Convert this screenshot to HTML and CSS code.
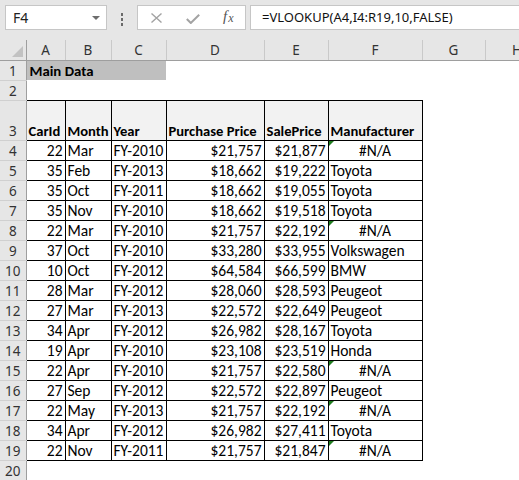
FILE: index.html
```html
<!DOCTYPE html>
<html>
<head>
<meta charset="utf-8">
<title>Sheet</title>
<link rel="stylesheet" href="styles.css">
</head>
<body>
<div class="toolbar">
  <div class="namebox"><span class="name">F4</span><span class="caret"></span></div>
  <div class="dots"><i></i><i></i><i></i></div>
  <div class="fbuttons">
    <svg class="ic-x" width="11" height="10" viewBox="0 0 11 10"><path d="M0.5 0.5 L10.5 9.5 M10.5 0.5 L0.5 9.5" stroke="#a3a3a3" stroke-width="1.4" fill="none"/></svg>
    <svg class="ic-ok" width="14" height="10" viewBox="0 0 14 10"><path d="M0.8 5 L4.8 9 L13.2 0.8" stroke="#a3a3a3" stroke-width="2" fill="none"/></svg>
    <span class="fx"><span class="f">f</span><span class="x">x</span></span>
  </div>
  <div class="formula">=VLOOKUP(A4,I4:R19,10,FALSE)</div>
</div>
<table class="grid">
  <colgroup>
    <col class="c-rh"><col class="c-a"><col class="c-b"><col class="c-c"><col class="c-d"><col class="c-e"><col class="c-f"><col class="c-g"><col class="c-h">
  </colgroup>
  <tr class="colhead">
    <th class="corner"><span class="tri"></span></th><th>A</th><th>B</th><th>C</th><th>D</th><th>E</th><th>F</th><th>G</th><th>H</th>
  </tr>
  <tr><th class="rh">1</th><td class="title" colspan="3">Main Data</td><td></td><td></td><td></td><td></td><td></td></tr>
  <tr><th class="rh">2</th><td></td><td></td><td></td><td></td><td></td><td></td><td></td><td></td></tr>
  <tr class="tall"><th class="rh">3</th><td class="b hd">CarId</td><td class="b hd">Month</td><td class="b hd">Year</td><td class="b hd">Purchase Price</td><td class="b hd">SalePrice</td><td class="b hd">Manufacturer</td><td></td><td></td></tr>
  <tr><th class="rh">4</th><td class="b r">22</td><td class="b">Mar</td><td class="b">FY-2010</td><td class="b r">$21,757</td><td class="b r">$21,877</td><td class="b na">#N/A</td><td></td><td></td></tr>
  <tr><th class="rh">5</th><td class="b r">35</td><td class="b">Feb</td><td class="b">FY-2013</td><td class="b r">$18,662</td><td class="b r">$19,222</td><td class="b">Toyota</td><td></td><td></td></tr>
  <tr><th class="rh">6</th><td class="b r">35</td><td class="b">Oct</td><td class="b">FY-2011</td><td class="b r">$18,662</td><td class="b r">$19,055</td><td class="b">Toyota</td><td></td><td></td></tr>
  <tr><th class="rh">7</th><td class="b r">35</td><td class="b">Nov</td><td class="b">FY-2010</td><td class="b r">$18,662</td><td class="b r">$19,518</td><td class="b">Toyota</td><td></td><td></td></tr>
  <tr><th class="rh">8</th><td class="b r">22</td><td class="b">Mar</td><td class="b">FY-2010</td><td class="b r">$21,757</td><td class="b r">$22,192</td><td class="b na">#N/A</td><td></td><td></td></tr>
  <tr><th class="rh">9</th><td class="b r">37</td><td class="b">Oct</td><td class="b">FY-2010</td><td class="b r">$33,280</td><td class="b r">$33,955</td><td class="b">Volkswagen</td><td></td><td></td></tr>
  <tr><th class="rh">10</th><td class="b r">10</td><td class="b">Oct</td><td class="b">FY-2012</td><td class="b r">$64,584</td><td class="b r">$66,599</td><td class="b">BMW</td><td></td><td></td></tr>
  <tr><th class="rh">11</th><td class="b r">28</td><td class="b">Mar</td><td class="b">FY-2012</td><td class="b r">$28,060</td><td class="b r">$28,593</td><td class="b">Peugeot</td><td></td><td></td></tr>
  <tr><th class="rh">12</th><td class="b r">27</td><td class="b">Mar</td><td class="b">FY-2013</td><td class="b r">$22,572</td><td class="b r">$22,649</td><td class="b">Peugeot</td><td></td><td></td></tr>
  <tr><th class="rh">13</th><td class="b r">34</td><td class="b">Apr</td><td class="b">FY-2012</td><td class="b r">$26,982</td><td class="b r">$28,167</td><td class="b">Toyota</td><td></td><td></td></tr>
  <tr><th class="rh">14</th><td class="b r">19</td><td class="b">Apr</td><td class="b">FY-2010</td><td class="b r">$23,108</td><td class="b r">$23,519</td><td class="b">Honda</td><td></td><td></td></tr>
  <tr><th class="rh">15</th><td class="b r">22</td><td class="b">Apr</td><td class="b">FY-2010</td><td class="b r">$21,757</td><td class="b r">$22,580</td><td class="b na">#N/A</td><td></td><td></td></tr>
  <tr><th class="rh">16</th><td class="b r">27</td><td class="b">Sep</td><td class="b">FY-2012</td><td class="b r">$22,572</td><td class="b r">$22,897</td><td class="b">Peugeot</td><td></td><td></td></tr>
  <tr><th class="rh">17</th><td class="b r">22</td><td class="b">May</td><td class="b">FY-2013</td><td class="b r">$21,757</td><td class="b r">$22,192</td><td class="b na">#N/A</td><td></td><td></td></tr>
  <tr><th class="rh">18</th><td class="b r">34</td><td class="b">Apr</td><td class="b">FY-2012</td><td class="b r">$26,982</td><td class="b r">$27,411</td><td class="b">Toyota</td><td></td><td></td></tr>
  <tr><th class="rh">19</th><td class="b r">22</td><td class="b">Nov</td><td class="b">FY-2011</td><td class="b r">$21,757</td><td class="b r">$21,847</td><td class="b na">#N/A</td><td></td><td></td></tr>
  <tr><th class="rh">20</th><td></td><td></td><td></td><td></td><td></td><td></td><td></td><td></td></tr>
</table>
</body>
</html>
```
FILE: styles.css
```css
html, body {
  margin: 0;
  padding: 0;
  background: #ffffff;
  overflow: hidden;
}
body {
  width: 519px;
  height: 480px;
}

/* ---------- toolbar / formula bar ---------- */
.toolbar {
  height: 40px;
  box-sizing: border-box;
  padding-top: 5px;
  background: #e6e6e6;
  display: flex;
  align-items: flex-start;
  font-family: "Noto Sans", "Open Sans", sans-serif;
  color: #222;
}
.namebox {
  margin-left: 5px;
  width: 102px;
  height: 25px;
  box-sizing: border-box;
  border: 1px solid #c6c6c6;
  background: #fff;
  display: flex;
  align-items: center;
  justify-content: space-between;
  padding: 0 6px 0 7px;
}
.name {
  font-size: 14px;
  line-height: 23px;
}
.caret {
  width: 0;
  height: 0;
  border-left: 4px solid transparent;
  border-right: 4px solid transparent;
  border-top: 4px solid #6d6d6d;
}
.dots {
  margin-left: 14px;
  margin-top: 8px;
  display: flex;
  flex-direction: column;
  gap: 2px;
}
.dots i {
  display: block;
  width: 2px;
  height: 3px;
  background: #6a6a6a;
}
.fbuttons {
  margin-left: 14px;
  width: 109px;
  height: 25px;
  box-sizing: border-box;
  border: 1px solid #c6c6c6;
  background: #fff;
  display: flex;
  align-items: center;
}
.ic-x {
  margin-left: 13px;
  margin-top: 1px;
}
.ic-ok {
  margin-left: 24px;
  margin-top: 3px;
}
.fx {
  margin-left: 23px;
  font-family: "Liberation Serif", "DejaVu Serif", serif;
  font-style: italic;
  color: #555;
  font-size: 15px;
  line-height: 1;
  margin-top: -2px;
}
.fx .x {
  font-size: 12px;
  position: relative;
  top: 1px;
  margin-left: 1px;
}
.formula {
  margin-left: 4px;
  flex: 1;
  height: 25px;
  box-sizing: border-box;
  border: 1px solid #c6c6c6;
  border-right: none;
  background: #fff;
  padding-left: 11px;
  font-size: 13px;
  line-height: 23px;
  white-space: nowrap;
  color: #111;
}

/* ---------- grid ---------- */
.grid {
  border-collapse: collapse;
  table-layout: fixed;
  width: 549px;
  font-family: "Carlito", "Lato", sans-serif;
  font-size: 15.5px;
  color: #000;
}
.c-rh { width: 26px; }
.c-a { width: 39px; }
.c-b { width: 46px; }
.c-c { width: 55px; }
.c-d { width: 98px; }
.c-e { width: 64px; }
.c-f { width: 94px; }
.c-g { width: 63px; }
.c-h { width: 64px; }

.grid tr { height: 20px; }
.grid tr.tall { height: 40px; }
.grid td, .grid th {
  padding: 0 2px;
  white-space: nowrap;
  overflow: visible;
  vertical-align: bottom;
  line-height: 18px;
  text-align: left;
  font-weight: normal;
}

.grid .colhead th {
  background: #e6e6e6;
  border-right: 1px solid #c9c9c9;
  border-bottom: 1px solid #9e9e9e;
  text-align: center;
  vertical-align: middle;
  color: #333;
  font-family: "Noto Sans", "Open Sans", sans-serif;
  font-size: 13.5px;
  line-height: 18px;
}
.grid .colhead th.corner {
  position: relative;
  border-right: 1px solid #9e9e9e;
}
.tri {
  position: absolute;
  right: 3px;
  bottom: 3px;
  width: 0;
  height: 0;
  border-left: 11px solid transparent;
  border-bottom: 11px solid #c2c2c2;
}
.grid th.rh {
  background: #e6e6e6;
  border-right: 1px solid #9e9e9e;
  border-bottom: 1px solid #d0d0d0;
  color: #333;
  text-align: center;
  font-family: "Noto Sans", "Open Sans", sans-serif;
  font-size: 13.5px;
}

.grid td.title {
  background: #bfbfbf;
  font-weight: bold;
  font-size: 14.8px;
  padding-left: 3px;
}
.grid td.b {
  border: 1px solid #000;
}
.grid td.hd {
  background: #f2f2f2;
  font-weight: bold;
  font-size: 14.6px;
}
.grid td.r { text-align: right; }
.grid td.na {
  text-align: center;
  position: relative;
}
.grid td.na::before {
  content: "";
  position: absolute;
  left: 0;
  top: 0;
  width: 0;
  height: 0;
  border-top: 5px solid #1f7d1f;
  border-right: 5px solid transparent;
}
```
